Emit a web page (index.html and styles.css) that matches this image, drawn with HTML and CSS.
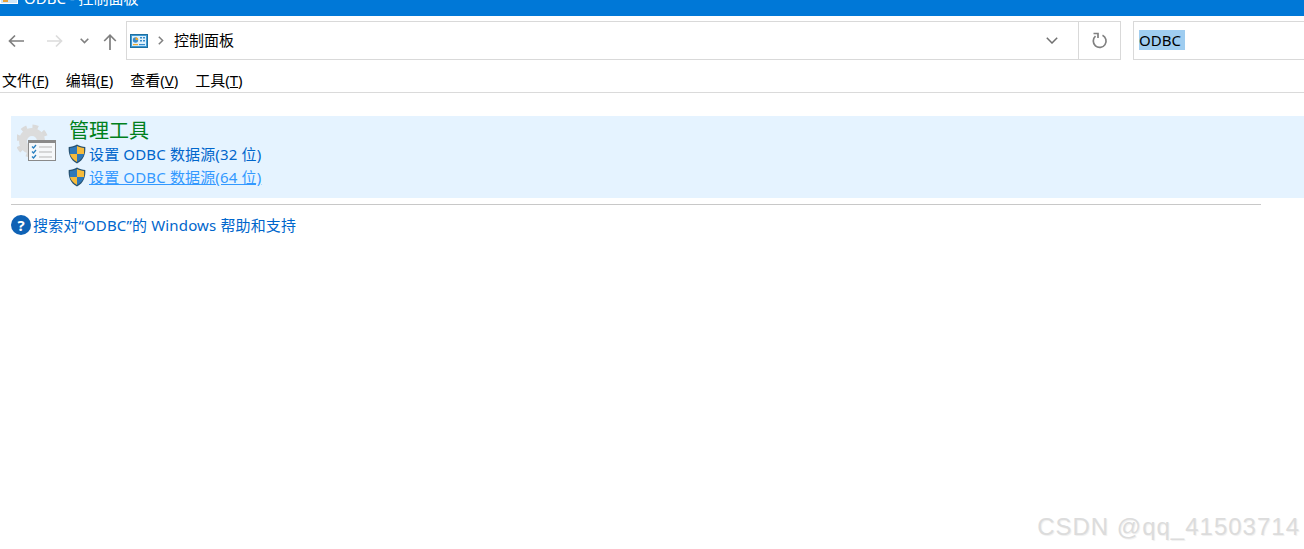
FILE: index.html
```html
<!DOCTYPE html>
<html>
<head>
    <title>ODBC - 控制面板</title>
    <link rel="stylesheet" href="styles.css">
</head>
<body>
    <div class="titlebar">
        <svg class="title-icon" width="18" height="16" viewBox="0 0 18 16">
            <rect x="0.5" y="0.5" width="17" height="15" fill="#cfe6f7" stroke="#fff"/>
            <rect x="3" y="10" width="5" height="4" fill="#e8a33d"/>
        </svg>
        <span class="title-text">ODBC - 控制面板</span>
    </div>

    <div class="toolbar">
        <div class="nav">
            <svg class="nav-back" width="16" height="14" viewBox="0 0 16 14">
                <path d="M7 1.500 1.500 7 7 12.500M1.500 7H16" fill="none" stroke="#7f7f7f" stroke-width="1.700"/>
            </svg>
            <svg class="nav-forward" width="16" height="14" viewBox="0 0 16 14">
                <path d="M9 1.500 14.500 7 9 12.500M14.500 7H0" fill="none" stroke="#dcdcdc" stroke-width="1.700"/>
            </svg>
            <svg class="nav-recent" width="9" height="6" viewBox="0 0 9 6">
                <path d="M.7.8 4.500 4.600 8.300.8" fill="none" stroke="#808080" stroke-width="1.600"/>
            </svg>
            <svg class="nav-up" width="14" height="16" viewBox="0 0 14 16">
                <path d="M1.200 7 7 1.200 12.800 7M7 1.200V16" fill="none" stroke="#7f7f7f" stroke-width="1.700"/>
            </svg>
        </div>

        <div class="address">
            <svg class="cp-icon" width="18" height="14" viewBox="0 0 18 14">
                <rect x="0.5" y="0.500" width="17" height="13" fill="#3d9ad6" stroke="#1f6f9f"/>
                <rect x="2" y="2" width="14" height="10" fill="#dff1fb"/>
                <circle cx="5.500" cy="6" r="2.700" fill="#3a8ccb"/>
                <path d="M5.500 6V3.300A2.700 2.700 0 0 1 8.200 6Z" fill="#f0a830"/>
                <path d="M10 3h2v1.500h-2zM13 3h2v1.500h-2zM10 6h2v1.500h-2zM13 6h2v1.500h-2z" fill="#3a8ccb"/>
                <rect x="3" y="10" width="5" height="1.200" fill="#f0a830"/>
                <rect x="9" y="10" width="6" height="1.200" fill="#3a8ccb"/>
            </svg>
            <svg class="crumb-arrow" width="6" height="9" viewBox="0 0 6 9">
                <path d="M.8.8 4.600 4.500.8 8.200" fill="none" stroke="#808080" stroke-width="1.500"/>
            </svg>
            <span class="crumb">控制面板</span>
            <svg class="address-drop" width="12" height="7" viewBox="0 0 12 7">
                <path d="M.8.8 6 6 11.200.8" fill="none" stroke="#707070" stroke-width="1.500"/>
            </svg>
            <div class="refresh">
                <svg width="16" height="17" viewBox="0 0 16 17">
                    <path d="M10.500 3.300A6.400 6.400 0 1 1 3.500 4.200" fill="none" stroke="#808080" stroke-width="1.700"/>
                    <path d="M1.500 1.500H6V6" fill="none" stroke="#808080" stroke-width="1.700"/>
                </svg>
            </div>
        </div>

        <div class="search">
            <span class="search-text">ODBC</span>
        </div>
    </div>

    <div class="menubar">
        <span class="menu-item">文件(<u>F</u>)</span>
        <span class="menu-item">编辑(<u>E</u>)</span>
        <span class="menu-item">查看(<u>V</u>)</span>
        <span class="menu-item">工具(<u>T</u>)</span>
    </div>

    <div class="content">
        <div class="group">
            <svg class="group-icon" width="40" height="40" viewBox="0 0 40 40">
                <circle cx="15" cy="18" r="14" fill="none" stroke="#dadada" stroke-width="5" stroke-dasharray="5.500 5.500"/>
                <circle cx="15" cy="18" r="9" fill="none" stroke="#dcdcdc" stroke-width="8"/>
                <rect x="11.500" y="17.500" width="27" height="20" fill="#f6f8fa" stroke="#8a8a8a"/>
                <rect x="11" y="17" width="28" height="3" fill="#8a8a8a"/>
                <path d="M15 23.500l1.500 1.500 2.500-3M15 28.500l1.500 1.500 2.500-3M15 33.500l1.500 1.500 2.500-3" fill="none" stroke="#2a80c0" stroke-width="1.300"/>
                <path d="M22 24h13M22 29h13M22 34h13" stroke="#b5b5b5"/>
            </svg>
            <div class="group-body">
                <div class="group-title">管理工具</div>
                <div class="task">
                    <svg class="shield" width="18" height="20" viewBox="0 0 18 20">
                        <path d="M9 .5C6.500 2 3.500 2.800 .7 3c-.4 7 1.500 13 8.300 16.500C15.800 16 17.700 10 17.300 3 14.500 2.800 11.500 2 9 .5Z" fill="#26506f"/>
                        <path d="M9 2v8H2C1.800 7.500 1.800 5.500 2 4c2.500-.3 5-1 7-2Z" fill="#2f78b8"/>
                        <path d="M9 2c2 1 4.500 1.700 7 2 .2 1.500.2 3.500 0 6H9Z" fill="#f7bb3a"/>
                        <path d="M2 10h7v8C5 15.800 2.800 13 2 10Z" fill="#f7bb3a"/>
                        <path d="M9 10h7c-.8 3-3 5.800-7 8Z" fill="#2f78b8"/>
                    </svg>
                    <a class="link">设置 ODBC 数据源(32 位)</a>
                </div>
                <div class="task">
                    <svg class="shield" width="18" height="20" viewBox="0 0 18 20">
                        <path d="M9 .5C6.500 2 3.500 2.800 .7 3c-.4 7 1.500 13 8.300 16.500C15.800 16 17.700 10 17.300 3 14.500 2.800 11.500 2 9 .5Z" fill="#26506f"/>
                        <path d="M9 2v8H2C1.800 7.500 1.800 5.500 2 4c2.500-.3 5-1 7-2Z" fill="#2f78b8"/>
                        <path d="M9 2c2 1 4.500 1.700 7 2 .2 1.500.2 3.500 0 6H9Z" fill="#f7bb3a"/>
                        <path d="M2 10h7v8C5 15.800 2.800 13 2 10Z" fill="#f7bb3a"/>
                        <path d="M9 10h7c-.8 3-3 5.800-7 8Z" fill="#2f78b8"/>
                    </svg>
                    <a class="link link-hover">设置 ODBC 数据源(64 位)</a>
                </div>
            </div>
        </div>

        <div class="divider"></div>

        <div class="help">
            <span class="help-icon">?</span>
            <a class="link">搜索对“ODBC”的 Windows 帮助和支持</a>
        </div>
    </div>

    <div class="watermark">CSDN @qq_41503714</div>
</body>
</html>
```

FILE: styles.css
```css
body {
    font-family: "Noto Sans", "Noto Sans CJK SC", sans-serif;
    background-color: #fff;
    color: #000;
    margin: 0;
    height: 549px;
    overflow: hidden;
    font-size: 15px;
}

.titlebar {
    display: flex;
    align-items: flex-end;
    gap: 6px;
    height: 16px;
    overflow: hidden;
    background-color: #0078d7;
    color: #fff;
}

.title-icon {
    flex: none;
    margin-bottom: 12px;
}

.title-text {
    flex: none;
    font-size: 15px;
    line-height: 20px;
    margin-bottom: 8px;
}

.toolbar {
    display: flex;
    align-items: flex-start;
    padding-top: 5px;
    height: 44px;
    box-sizing: border-box;
}

.nav {
    display: flex;
    align-items: center;
    flex: none;
    width: 126px;
    height: 39px;
}

.nav-back {
    margin-left: 8px;
}

.nav-forward {
    margin-left: 23px;
}

.nav-recent {
    margin-left: 17px;
}

.nav-up {
    margin-left: 14px;
    margin-top: 3px;
}

.address {
    display: flex;
    align-items: center;
    flex: none;
    width: 995px;
    height: 39px;
    box-sizing: border-box;
    border: 1px solid #d9d9d9;
}

.cp-icon {
    margin-left: 3px;
}

.crumb-arrow {
    margin-left: 10px;
}

.crumb {
    margin-left: 10px;
    margin-bottom: 2px;
}

.address-drop {
    margin-left: auto;
    margin-right: 20px;
}

.refresh {
    display: flex;
    align-items: center;
    justify-content: center;
    width: 41px;
    height: 100%;
    border-left: 1px solid #d9d9d9;
}

.search {
    display: flex;
    align-items: center;
    flex: 1;
    margin-left: 12px;
    height: 39px;
    box-sizing: border-box;
    border: 1px solid #d9d9d9;
    border-right: none;
    padding-left: 5px;
}

.search-text {
    background-color: #9fcdf0;
    line-height: 20px;
    padding-right: 4px;
    margin-bottom: 2px;
}

.menubar {
    display: flex;
    align-items: center;
    gap: 17px;
    height: 33px;
    box-sizing: border-box;
    padding: 6px 2px 0;
    border-bottom: 1px solid #dadada;
    font-size: 15px;
}

.content {
    padding: 23px 0 0 11px;
}

.group {
    display: flex;
    height: 82px;
    background-color: #e5f3ff;
}

.group-icon {
    flex: none;
    margin: 7px 0 0 6px;
}

.group-body {
    margin-left: 12px;
}

.group-title {
    font-size: 20px;
    line-height: 23px;
    padding-top: 3px;
    color: #00801c;
}

.task {
    display: flex;
    align-items: center;
    height: 23px;
    margin-left: -1px;
}

.shield {
    flex: none;
    margin-right: 3px;
}

.link {
    color: #0066cc;
    font-size: 15px;
    letter-spacing: 0.15px;
}

.link-hover {
    color: #3399ff;
    text-decoration: underline;
}

.divider {
    width: 1250px;
    height: 1px;
    margin-top: 6px;
    background-color: #c8c8c8;
}

.help {
    display: flex;
    align-items: center;
    gap: 2px;
    margin-top: 9px;
}

.help-icon {
    display: flex;
    align-items: center;
    justify-content: center;
    width: 20px;
    height: 20px;
    border-radius: 50%;
    background-color: #0f62b5;
    color: #fff;
    font-weight: bold;
    font-size: 15px;
}

.watermark {
    position: absolute;
    right: 4px;
    top: 513px;
    font-family: "Liberation Sans", sans-serif;
    font-size: 24px;
    color: #dcdcdc;
    text-shadow: 1px 1px 1px #efefef;
    letter-spacing: 1px;
}
```
